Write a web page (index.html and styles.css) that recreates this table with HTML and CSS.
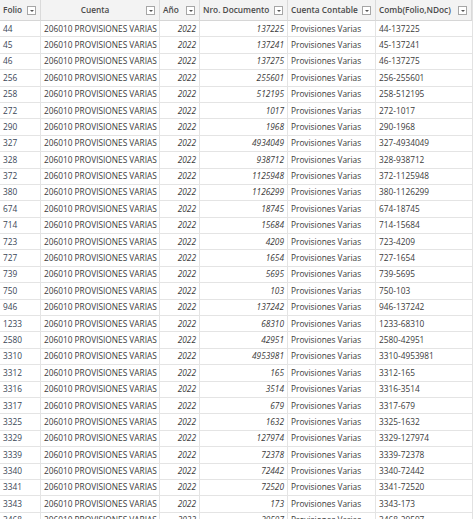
FILE: index.html
```html
<!DOCTYPE html>
<html lang="es">
<head>
<meta charset="utf-8">
<title>Tabla</title>
<link rel="stylesheet" href="styles.css">
</head>
<body>
<div class="table">
  <div class="row head">
    <div class="cell"><span class="h">Folio</span><span class="dd"></span></div>
    <div class="cell center"><span class="h grow">Cuenta</span><span class="dd"></span></div>
    <div class="cell"><span class="h">Año</span><span class="dd"></span></div>
    <div class="cell"><span class="h">Nro. Documento</span><span class="dd"></span></div>
    <div class="cell"><span class="h">Cuenta Contable</span><span class="dd"></span></div>
    <div class="cell"><span class="h">Comb(Folio,NDoc)</span><span class="dd"></span></div>
  </div>
</div>
<script src="app.js"></script>
</body>
</html>
```
FILE: styles.css
```css
html, body { margin: 0; padding: 0; background: #fff; }
body { font-family: "Open Sans", "Noto Sans", sans-serif; font-size: 8.3px; color: #3b3b3b; overflow: hidden; }
.table { width: 472px; border-right: 1px solid #e2e2e2; }
.row { display: grid; grid-template-columns: 41px 119px 40px 88px 88px 96px; height: 16.4px; }
.row.head { height: 21px; background: #f3f3f3; }
.cell { border-right: 1px solid #e4e4e4; border-bottom: 1px solid #e4e4e4; padding: 0 3px; display: flex; align-items: center; white-space: nowrap; overflow: hidden; line-height: 1; }
.cell:last-child { border-right: none; }
.head .cell { border-right: 1px solid #dadada; border-bottom: 1px solid #d6d6d6; justify-content: space-between; padding-right: 4px; }
.h { font-weight: 600; color: #4a4a4a; }
.center .h.grow { flex: 1; text-align: center; }
.dd { width: 9px; height: 9px; box-sizing: border-box; border: 1px solid #a6a6a6; background: #fff; position: relative; flex: none; }
.dd::after { content: ""; position: absolute; left: 2px; top: 3px; border-left: 2px solid transparent; border-right: 2px solid transparent; border-top: 2px solid #555; }
.num { justify-content: flex-end; font-style: italic; }
.folio { color: #3a4656; }
```
FILE: app.js
```js
const data = [
  [44,137225],[45,137241],[46,137275],[256,255601],[258,512195],[272,1017],[290,1968],
  [327,4934049],[328,938712],[372,1125948],[380,1126299],[674,18745],[714,15684],[723,4209],
  [727,1654],[739,5695],[750,103],[946,137242],[1233,68310],[2580,42951],[3310,4953981],
  [3312,165],[3316,3514],[3317,679],[3325,1632],[3329,127974],[3339,72378],[3340,72442],
  [3341,72520],[3343,173],[3468,29597]
];
const table = document.querySelector('.table');
for (const [f, n] of data) {
  const row = document.createElement('div');
  row.className = 'row';
  row.innerHTML =
    `<div class="cell folio">${f}</div>` +
    `<div class="cell">206010 PROVISIONES VARIAS</div>` +
    `<div class="cell num">2022</div>` +
    `<div class="cell num">${n}</div>` +
    `<div class="cell">Provisiones Varias</div>` +
    `<div class="cell">${f}-${n}</div>`;
  table.appendChild(row);
}
```
